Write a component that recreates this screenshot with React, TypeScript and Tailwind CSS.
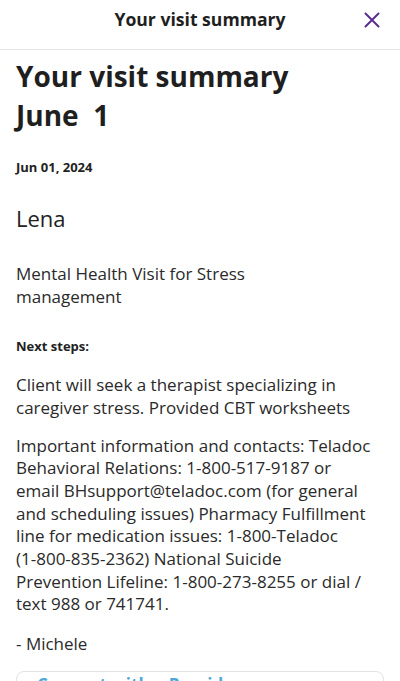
import React from "react";

const important = [
  "Important information and contacts: Teladoc",
  "Behavioral Relations: 1-800-517-9187 or",
  "email BHsupport@teladoc.com (for general",
  "and scheduling issues) Pharmacy Fulfillment",
  "line for medication issues: 1-800-Teladoc",
  "(1-800-835-2362) National Suicide",
  "Prevention Lifeline: 1-800-273-8255 or dial /",
  "text 988 or 741741.",
];

export default function App() {
  return (
    <div className="w-[400px] h-[681px] overflow-hidden bg-white text-[#222222]" style={{ fontFamily: "'Open Sans', 'Noto Sans', sans-serif" }}>
      <header className="h-[50px] border-b border-[#e6e6e6] flex items-start justify-center relative pt-[7px]">
        <div className="text-[17.6px] leading-[24px] font-bold text-[#1f1f1f]">Your visit summary</div>
        <button className="absolute right-[20px] top-[11px] w-[17px] h-[17px] flex items-center justify-center">
          <svg width="16" height="16" viewBox="0 0 16 16" fill="none">
            <path d="M1.5 1.5 L14.5 14.5 M14.5 1.5 L1.5 14.5" stroke="#5b2d90" strokeWidth="2" strokeLinecap="round" />
          </svg>
        </button>
      </header>
      <main className="px-4 flex flex-col">
        <h1 className="mt-[7px] text-[28px] leading-[39px] font-bold text-[#1f1f1f]">
          Your visit summary
          <br />
          June&nbsp;&nbsp;1
        </h1>
        <div className="mt-[23px] text-[13px] leading-[18px] font-bold text-[#222]">Jun 01, 2024</div>
        <div className="mt-[28px] text-[22px] leading-[28px] text-[#222]">Lena</div>
        <p className="mt-[31px] text-[17px] leading-[22.67px] text-[#2a2a2a]">
          Mental Health Visit for Stress
          <br />
          management
        </p>
        <div className="mt-[29px] text-[13px] leading-[18px] font-bold text-[#222]">Next steps:</div>
        <p className="mt-[19px] text-[17px] leading-[22.67px] text-[#2a2a2a]">
          Client will seek a therapist specializing in
          <br />
          caregiver stress. Provided CBT worksheets
        </p>
        <p className="mt-[15px] text-[17px] leading-[22.67px] text-[#2a2a2a] flex flex-col">
          {important.map((l) => (
            <span key={l} className="whitespace-nowrap">{l}</span>
          ))}
        </p>
        <p className="mt-[17px] text-[17px] leading-[22.67px] text-[#2a2a2a]">- Michele</p>
        <div className="mt-[15px] border border-[#e3e3e3] rounded-[8px] px-[20px] pt-[2px] pb-4 flex items-center gap-2">
          <span className="text-[17px] leading-[22px] font-bold text-[#4fa8d6]">Connect with a Provider</span>
        </div>
      </main>
    </div>
  );
}
